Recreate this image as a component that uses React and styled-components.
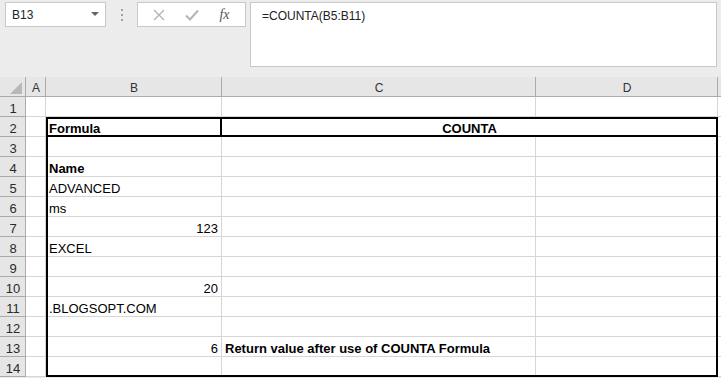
import React from 'react'
import styled, { createGlobalStyle } from 'styled-components'

const GlobalStyle = createGlobalStyle`
  html, body {
    margin: 0;
    padding: 0;
    background: #ffffff;
    overflow: hidden;
  }
  * { box-sizing: border-box; }
`

const Window = styled.div`
  width: 721px;
  height: 378px;
  overflow: hidden;
  font-family: "Liberation Sans", Arial, sans-serif;
  background: #ececec;
`

const Toolbar = styled.div`
  display: flex;
  align-items: flex-start;
  height: 77px;
  padding: 2px 4px 0 5px;
  background: #ececec;
`

const NameBox = styled.div`
  width: 101px;
  height: 25px;
  background: #fff;
  border: 1px solid #c8c8c8;
  display: flex;
  align-items: center;
  justify-content: space-between;
  padding: 0 6px 0 6px;
  font-size: 12px;
  color: #222;
`

const Caret = styled.span`
  width: 0;
  height: 0;
  border-left: 4px solid transparent;
  border-right: 4px solid transparent;
  border-top: 4px solid #666;
  margin-top: -2px;
`

const Grip = styled.div`
  width: 31px;
  height: 25px;
  display: flex;
  flex-direction: column;
  align-items: center;
  justify-content: center;
  gap: 3px;
  span {
    width: 2px;
    height: 2px;
    background: #a0a0a0;
  }
`

const ButtonBox = styled.div`
  width: 109px;
  height: 25px;
  background: #fff;
  border: 1px solid #c8c8c8;
  display: flex;
  align-items: center;
  justify-content: space-around;
  padding: 0 4px;
  margin-right: 4px;
`

const IconSlot = styled.span`
  width: 24px;
  display: flex;
  justify-content: center;
  align-items: center;
  color: ${p => p.dark ? '#555' : '#b0b0b0'};
  font-family: "Liberation Serif", "Times New Roman", serif;
  font-style: italic;
  font-size: 14px;
`

const FormulaBox = styled.div`
  flex: 1;
  height: 65px;
  background: #fff;
  border: 1px solid #c8c8c8;
  padding: 6px 0 0 11px;
  font-size: 12px;
  color: #222;
`

const Sheet = styled.div`
  display: grid;
  grid-template-columns: 26px 20px 176px 314px 182px 1fr;
  grid-auto-rows: 20px;
  background: #fff;
`

const Corner = styled.div`
  background: #e6e6e6;
  box-shadow: inset -1px -1px 0 #ababab;
  display: flex;
  align-items: flex-end;
  justify-content: flex-end;
  padding: 0 4px 3px 0;
`

const ColHead = styled.div`
  background: #e6e6e6;
  box-shadow: inset -1px -1px 0 #ababab;
  display: flex;
  align-items: center;
  justify-content: center;
  font-size: 12px;
  color: #333;
  padding-top: 2px;
`

const RowHead = styled.div`
  background: #e6e6e6;
  box-shadow: inset -1px -1px 0 #ababab;
  display: flex;
  align-items: center;
  justify-content: center;
  font-size: 13px;
  color: #2a2a2a;
  padding-top: 2px;
`

const thick = (sides = '') => {
  const s = []
  if (sides.includes('t')) s.push('inset 0 2px 0 #000')
  if (sides.includes('b')) s.push('inset 0 -2px 0 #000')
  if (sides.includes('l')) s.push('inset 2px 0 0 #000')
  if (sides.includes('r')) s.push('inset -2px 0 0 #000')
  s.push('inset -1px -1px 0 #d6d6d6')
  return s.join(', ')
}

const Cell = styled.div`
  grid-column: span ${p => p.span || 1};
  background: #fff;
  box-shadow: ${p => thick(p.edges)};
  display: flex;
  align-items: center;
  justify-content: ${p => p.align === 'right' ? 'flex-end' : p.align === 'center' ? 'center' : 'flex-start'};
  padding: 2px 4px 0 3px;
  font-size: 13px;
  font-weight: ${p => p.bold ? 700 : 400};
  color: #000;
  white-space: nowrap;
  overflow: visible;
  position: relative;
  z-index: ${p => p.over ? 1 : 0};
`

const rows = [
  { n: 1, b: {}, c: {}, d: {} },
  { n: 2, b: { text: 'Formula', bold: true, edges: 'tblr' }, c: { text: 'COUNTA', bold: true, align: 'center', span: 2, edges: 'tbr' } },
  { n: 3, b: { edges: 'l' }, c: {}, d: { edges: 'r' } },
  { n: 4, b: { text: 'Name', bold: true, edges: 'l' }, c: {}, d: { edges: 'r' } },
  { n: 5, b: { text: 'ADVANCED', edges: 'l' }, c: {}, d: { edges: 'r' } },
  { n: 6, b: { text: 'ms', edges: 'l' }, c: {}, d: { edges: 'r' } },
  { n: 7, b: { text: '123', align: 'right', edges: 'l' }, c: {}, d: { edges: 'r' } },
  { n: 8, b: { text: 'EXCEL', edges: 'l' }, c: {}, d: { edges: 'r' } },
  { n: 9, b: { edges: 'l' }, c: {}, d: { edges: 'r' } },
  { n: 10, b: { text: '20', align: 'right', edges: 'l' }, c: {}, d: { edges: 'r' } },
  { n: 11, b: { text: '.BLOGSOPT.COM', edges: 'l' }, c: {}, d: { edges: 'r' } },
  { n: 12, b: { edges: 'l' }, c: {}, d: { edges: 'r' } },
  { n: 13, b: { text: '6', align: 'right', edges: 'l' }, c: { text: 'Return value after use of COUNTA Formula', bold: true, over: true }, d: { edges: 'r' } },
  { n: 14, b: { edges: 'lb' }, c: { edges: 'b' }, d: { edges: 'rb' } },
]

const SheetCell = ({ cfg }) => (
  <Cell span={cfg.span} edges={cfg.edges} bold={cfg.bold} align={cfg.align} over={cfg.over}>
    {cfg.text}
  </Cell>
)

const App = () => {
  return (
    <Window>
      <GlobalStyle />
      <Toolbar>
        <NameBox>
          B13
          <Caret />
        </NameBox>
        <Grip><span /><span /><span /></Grip>
        <ButtonBox>
          <IconSlot>
            <svg width="12" height="12" viewBox="0 0 12 12">
              <path d="M1 1 L11 11 M11 1 L1 11" stroke="#b4b4b4" strokeWidth="1.4" fill="none" />
            </svg>
          </IconSlot>
          <IconSlot>
            <svg width="14" height="12" viewBox="0 0 14 12">
              <path d="M1 6.5 L5 10.5 L13 1.5" stroke="#b4b4b4" strokeWidth="2" fill="none" />
            </svg>
          </IconSlot>
          <IconSlot dark>fx</IconSlot>
        </ButtonBox>
        <FormulaBox>=COUNTA(B5:B11)</FormulaBox>
      </Toolbar>
      <Sheet>
        <Corner>
          <svg width="12" height="12" viewBox="0 0 12 12">
            <polygon points="12,0 12,12 0,12" fill="#b8b8b8" />
          </svg>
        </Corner>
        {['A', 'B', 'C', 'D', ''].map((l, i) => (
          <ColHead key={i}>{l}</ColHead>
        ))}
        {rows.map(r => (
          <React.Fragment key={r.n}>
            <RowHead>{r.n}</RowHead>
            <Cell />
            <SheetCell cfg={r.b} />
            <SheetCell cfg={r.c} />
            {r.d && <SheetCell cfg={r.d} />}
            <Cell />
          </React.Fragment>
        ))}
      </Sheet>
    </Window>
  )
}

export default App
